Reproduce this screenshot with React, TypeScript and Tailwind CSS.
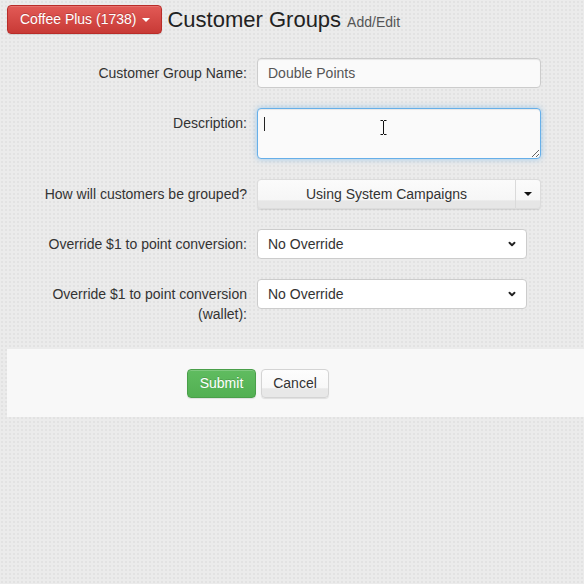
import { ChevronDown } from "lucide-react";

const font = "font-['Liberation_Sans',Arial,sans-serif]";

function Caret({ className = "" }: { className?: string }) {
  return (
    <span
      className={`inline-block h-0 w-0 border-x-[4px] border-t-[4px] border-x-transparent ${className}`}
    />
  );
}

function Row({
  label,
  children,
}: {
  label: React.ReactNode;
  children: React.ReactNode;
}) {
  return (
    <div className="flex items-start">
      <label className="ml-[32px] w-[215px] pt-[5px] text-right text-[14px] leading-[20px] text-[#333]">
        {label}
      </label>
      <div className="ml-[10px]">{children}</div>
    </div>
  );
}

function Select() {
  return (
    <div className="relative w-[270px]">
      <select className="h-[30px] w-full appearance-none rounded-[4px] border border-[#ccc] bg-white pl-[10px] text-[14px] text-[#333] outline-none">
        <option>No Override</option>
      </select>
      <ChevronDown
        className="pointer-events-none absolute right-[10px] top-[10px] h-[10px] w-[10px] text-[#222]"
        strokeWidth={4.5}
      />
    </div>
  );
}

export default function App() {
  return (
    <div
      className={`${font} min-h-[584px] bg-[#ebebeb] bg-[radial-gradient(#e2e2e2_1px,transparent_1px)] bg-[length:4px_4px] pt-[5px]`}
    >
      <div className="flex items-start pl-[7px]">
        <button className="flex h-[29px] items-center gap-[6px] rounded-[4px] border border-[#b92c28] bg-[linear-gradient(to_bottom,#e25a56,#c83a36)] pl-[12px] pr-[11px] text-[14px] text-white shadow-[inset_0_1px_0_rgba(255,255,255,0.15),0_1px_1px_rgba(0,0,0,0.1)] [text-shadow:0_-1px_0_rgba(0,0,0,0.2)]">
          Coffee Plus (1738)
          <Caret className="border-t-white" />
        </button>
        <div className="ml-[5px] flex items-baseline leading-[29px]">
          <h1 className="text-[22px] text-[#222]">Customer Groups</h1>
          <span className="ml-[6px] text-[14px] text-[#555]">Add/Edit</span>
        </div>
      </div>

      <form className="mt-[21px] flex flex-col gap-[20px]">
        <Row label="Customer Group Name:">
          <input
            defaultValue="Double Points"
            className="h-[30px] w-[284px] rounded-[4px] border border-[#ccc] bg-[#fafafa] px-[10px] text-[14px] text-[#555] shadow-[inset_0_1px_1px_rgba(0,0,0,0.075)] outline-none"
          />
        </Row>
        <Row label="Description:">
          <div className="relative">
            <textarea className="block h-[51px] w-[284px] rounded-[4px] border border-[#66afe9] bg-[#fafafa] px-[6px] text-[14px] text-[#555] shadow-[inset_0_1px_1px_rgba(0,0,0,0.075),0_0_6px_rgba(102,175,233,0.6)] outline-none" />
            <span className="absolute left-[7px] top-[9px] h-[14px] w-px bg-[#222]" />
            <svg
              className="pointer-events-none absolute left-[123px] top-[12px]"
              width="7"
              height="15"
              viewBox="0 0 7 15"
            >
              <path
                d="M0.5 0.5h2.5M4 0.5h2.5M3.5 1v13M0.5 14.5h2.5M4 14.5h2.5"
                stroke="#111"
                strokeWidth="1"
                fill="none"
              />
            </svg>
          </div>
        </Row>
        <Row label="How will customers be grouped?">
          <div className="flex">
            <button
              type="button"
              className="h-[30px] w-[259px] rounded-l-[4px] border border-[#dcdcdc] bg-[linear-gradient(to_bottom,#fbfbfb_0%,#f6f6f6_70%,#e6e6e6_75%,#e6e6e6_100%)] text-[14px] text-[#333] shadow-[0_1px_1px_rgba(0,0,0,0.1)]"
            >
              Using System Campaigns
            </button>
            <button
              type="button"
              className="flex h-[30px] w-[25px] items-center justify-center rounded-r-[4px] border border-l-0 border-[#dcdcdc] bg-[linear-gradient(to_bottom,#fbfbfb_0%,#f6f6f6_70%,#e6e6e6_75%,#e6e6e6_100%)] shadow-[0_1px_1px_rgba(0,0,0,0.1)]"
            >
              <Caret className="border-t-[#111]" />
            </button>
          </div>
        </Row>
        <Row label="Override $1 to point conversion:">
          <Select />
        </Row>
        <Row label="Override $1 to point conversion (wallet):">
          <Select />
        </Row>
      </form>

      <div className="ml-[7px] mt-[25px] flex h-[68px] items-center bg-[#f8f8f8] pl-[180px]">
        <div className="flex gap-[5px]">
          <button
            type="button"
            className="h-[29px] w-[69px] rounded-[4px] border border-[#4a9f4a] bg-[linear-gradient(to_bottom,#60bc60,#52b052)] text-[14px] text-white shadow-[inset_0_1px_0_rgba(255,255,255,0.2),0_1px_1px_rgba(0,0,0,0.1)] [text-shadow:0_-1px_0_rgba(0,0,0,0.15)]"
          >
            Submit
          </button>
          <button
            type="button"
            className="h-[29px] w-[68px] rounded-[4px] border border-[#d4d4d4] bg-[linear-gradient(to_bottom,#fdfdfd_0%,#f8f8f8_65%,#e8e8e8_70%,#e8e8e8_100%)] text-[14px] text-[#333] shadow-[0_1px_1px_rgba(0,0,0,0.1)]"
          >
            Cancel
          </button>
        </div>
      </div>
    </div>
  );
}
